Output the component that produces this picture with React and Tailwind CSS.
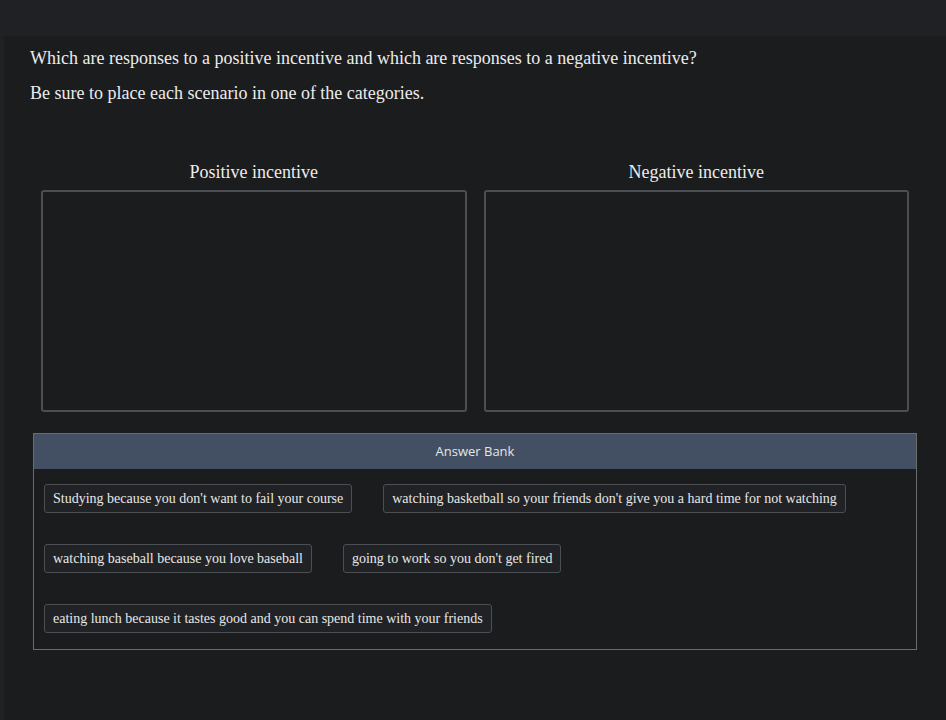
export default function App() {
  const answers = [
    "Studying because you don't want to fail your course",
    "watching basketball so your friends don't give you a hard time for not watching",
    "watching baseball because you love baseball",
    "going to work so you don't get fired",
    "eating lunch because it tastes good and you can spend time with your friends",
  ];

  return (
    <div className="min-h-[720px] bg-[#202124] pt-[36px] pl-[4px]" style={{ fontFamily: '"Liberation Serif", serif' }}>
      <div className="min-h-[684px] bg-[#1b1c1e] px-[29px] pt-[10px] pb-8">
        <p className="ml-[-3px] text-[18px] leading-[24px] text-[#ececec]">
          Which are responses to a positive incentive and which are responses to a negative incentive?
        </p>
        <p className="ml-[-3px] mt-[11px] text-[18px] leading-[24px] text-[#ececec]">
          Be sure to place each scenario in one of the categories.
        </p>

        <div className="mt-[55px] grid grid-cols-2 gap-[17px] px-[8px]">
          {["Positive incentive", "Negative incentive"].map((label) => (
            <div key={label}>
              <div className="text-center text-[18px] leading-[24px] text-[#ececec]">{label}</div>
              <div className="mt-[6px] h-[222px] rounded-[3px] border-2 border-[#4b4e53] bg-[#1b1c1e]" />
            </div>
          ))}
        </div>

        <div className="mt-[21px] border border-[#6b6b6b]">
          <div
            className="flex h-[35px] items-center justify-center bg-[#434f62] text-[13px] text-[#e4e6ea]"
            style={{ fontFamily: '"Open Sans", sans-serif' }}
          >
            Answer Bank
          </div>
          <div className="flex flex-wrap gap-[31px] px-[10px] pt-[15px] pb-[16px]">
            {answers.map((a) => (
              <div
                key={a}
                className="flex h-[29px] items-center rounded-[3px] border border-[#4b4e53] bg-[#202225] px-[8px] text-[14px] text-[#e8e8e8]"
              >
                {a}
              </div>
            ))}
          </div>
        </div>
      </div>
    </div>
  );
}
